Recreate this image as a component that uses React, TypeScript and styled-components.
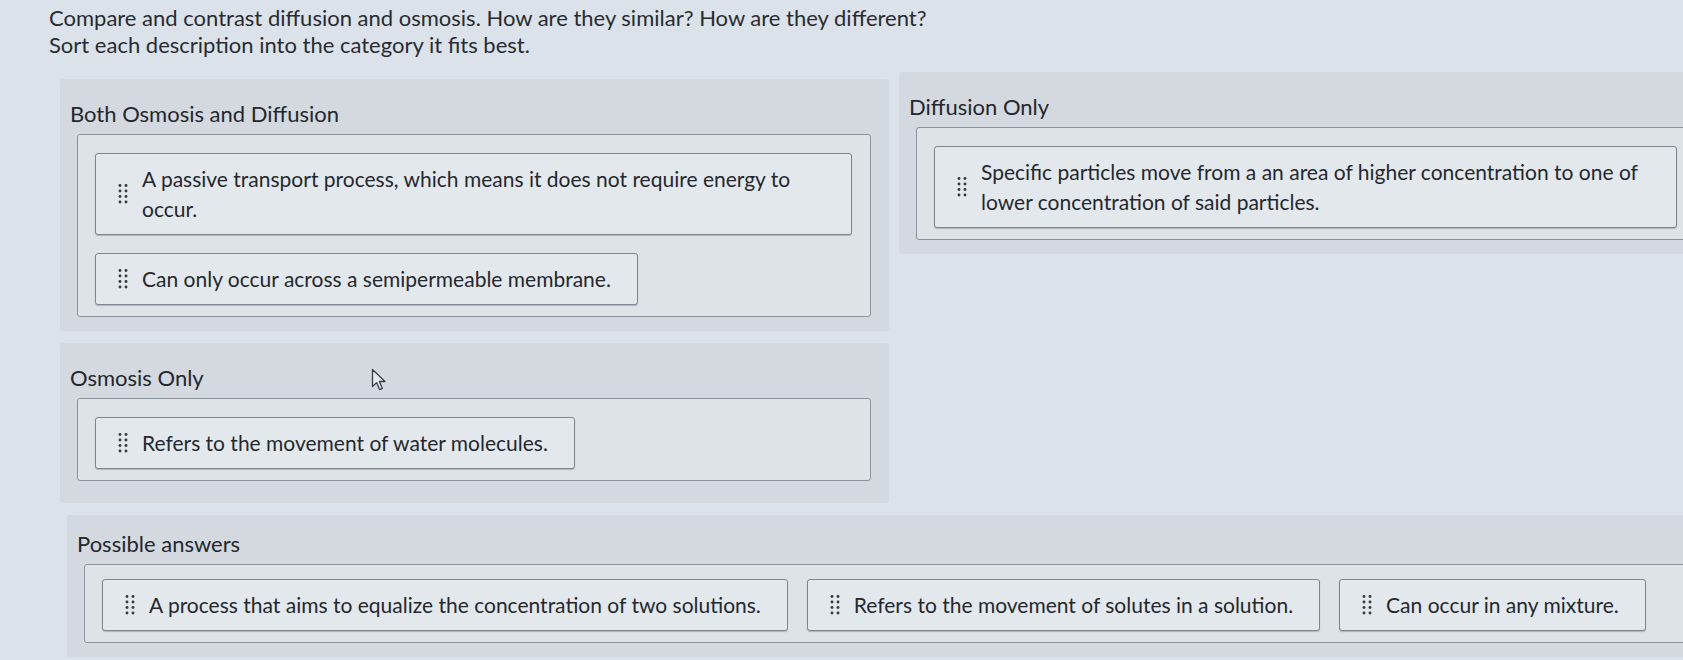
import React from 'react';
import styled, { createGlobalStyle } from 'styled-components';

const GlobalStyle = createGlobalStyle`
  html, body {
    margin: 0;
    padding: 0;
    background: #dbe2e9;
    overflow: hidden;
  }
  body {
    font-family: Lato, "Open Sans", "Liberation Sans", sans-serif;
    color: #25292f;
  }
`;

const Page = styled.div`
  width: 1720px;
  padding: 4px 0 0 49px;
  box-sizing: border-box;
`;

const Prompt = styled.p`
  margin: 0;
  font-size: 22px;
  line-height: 27px;
  color: #282c32;
`;

const Board = styled.div`
  display: grid;
  grid-template-columns: 829px 815px;
  align-items: start;
  column-gap: 10px;
  row-gap: 12px;
  margin: 21px 0 0 11px;
`;

const Column = styled.div`
  display: flex;
  flex-direction: column;
  gap: 12px;
`;

const Panel = styled.section<{ $wide?: boolean; $tight?: boolean; $raise?: number; $roomy?: boolean }>`
  position: relative;
  background: #d3d9df;
  border-radius: 3px;
  padding: ${(p) => (p.$tight ? '14px' : '20px')} 18px ${(p) => (p.$roomy ? '22px' : '14px')} 10px;
  grid-column: ${(p) => (p.$wide ? '1 / -1' : 'auto')};
  margin-left: ${(p) => (p.$wide ? '7px' : '0')};
  margin-top: ${(p) => (p.$raise ? `-${p.$raise}px` : '0')};
`;

const Label = styled.h3`
  margin: 0 0 5px;
  font-size: 22px;
  line-height: 30px;
  font-weight: 400;
  color: #24282e;
`;

const DropZone = styled.div<{ $row?: boolean; $tight?: boolean }>`
  display: flex;
  flex-direction: ${(p) => (p.$row ? 'row' : 'column')};
  flex-wrap: wrap;
  align-items: flex-start;
  gap: 18px 19px;
  margin-left: 7px;
  padding: ${(p) => (p.$tight ? '14px' : '18px')} 18px 11px 17px;
  background: #dee3e8;
  border: 1px solid #8b9299;
  border-radius: 3px;
  min-height: 50px;
`;

const Card = styled.div<{ $fill?: boolean }>`
  display: flex;
  align-items: center;
  gap: 14px;
  align-self: ${(p) => (p.$fill ? 'stretch' : 'flex-start')};
  padding: 10px 26px 10px 22px;
  background: #e3e8ec;
  border: 1px solid #7f868e;
  border-radius: 3px;
  box-shadow: 0 1px 1px rgba(40, 46, 54, 0.25);
  font-size: 21px;
  line-height: 30px;
  color: #24282e;
`;

const CardText = styled.span`
  flex: 1;
`;

const Handle = styled.svg`
  flex: none;
  width: 10px;
  height: 22px;
  color: #363b42;
`;

const Pointer = styled.svg`
  position: absolute;
  left: 311px;
  top: 25px;
  width: 16px;
  height: 24px;
`;

const Grip = () => (
  <Handle viewBox="0 0 10 22" aria-hidden>
    {[2.5, 8, 13.5, 19].map((y) => (
      <g key={y} fill="currentColor">
        <circle cx="2" cy={y} r="1.45" />
        <circle cx="8" cy={y} r="1.45" />
      </g>
    ))}
  </Handle>
);

const Item = ({ text, fill }: { text: string; fill?: boolean }) => (
  <Card $fill={fill}>
    <Grip />
    <CardText>{text}</CardText>
  </Card>
);

export default function App() {
  return (
    <>
      <GlobalStyle />
      <Page>
        <Prompt>
          Compare and contrast diffusion and osmosis. How are they similar? How are they different?
          <br />
          Sort each description into the category it fits best.
        </Prompt>

        <Board>
          <Column>
            <Panel>
              <Label>Both Osmosis and Diffusion</Label>
              <DropZone>
                <Item fill text="A passive transport process, which means it does not require energy to occur." />
                <Item text="Can only occur across a semipermeable membrane." />
              </DropZone>
            </Panel>

            <Panel $roomy>
              <Label>Osmosis Only</Label>
              <DropZone>
                <Item text="Refers to the movement of water molecules." />
              </DropZone>
              <Pointer viewBox="0 0 16 24" aria-hidden>
                <path
                  d="M1.5 1.5 L1.5 18.5 L5.6 14.6 L8.6 21.6 L11.4 20.4 L8.4 13.5 L14 13.5 Z"
                  fill="#e4e9ee"
                  stroke="#3a4048"
                  strokeWidth="1.3"
                  strokeLinejoin="round"
                />
              </Pointer>
            </Panel>
          </Column>

          <Panel $raise={7}>
            <Label>Diffusion Only</Label>
            <DropZone>
              <Item
                fill
                text="Specific particles move from a an area of higher concentration to one of lower concentration of said particles."
              />
            </DropZone>
          </Panel>

          <Panel $wide $tight>
            <Label>Possible answers</Label>
            <DropZone $row $tight>
              <Item text="A process that aims to equalize the concentration of two solutions." />
              <Item text="Refers to the movement of solutes in a solution." />
              <Item text="Can occur in any mixture." />
            </DropZone>
          </Panel>
        </Board>
      </Page>
    </>
  );
}
